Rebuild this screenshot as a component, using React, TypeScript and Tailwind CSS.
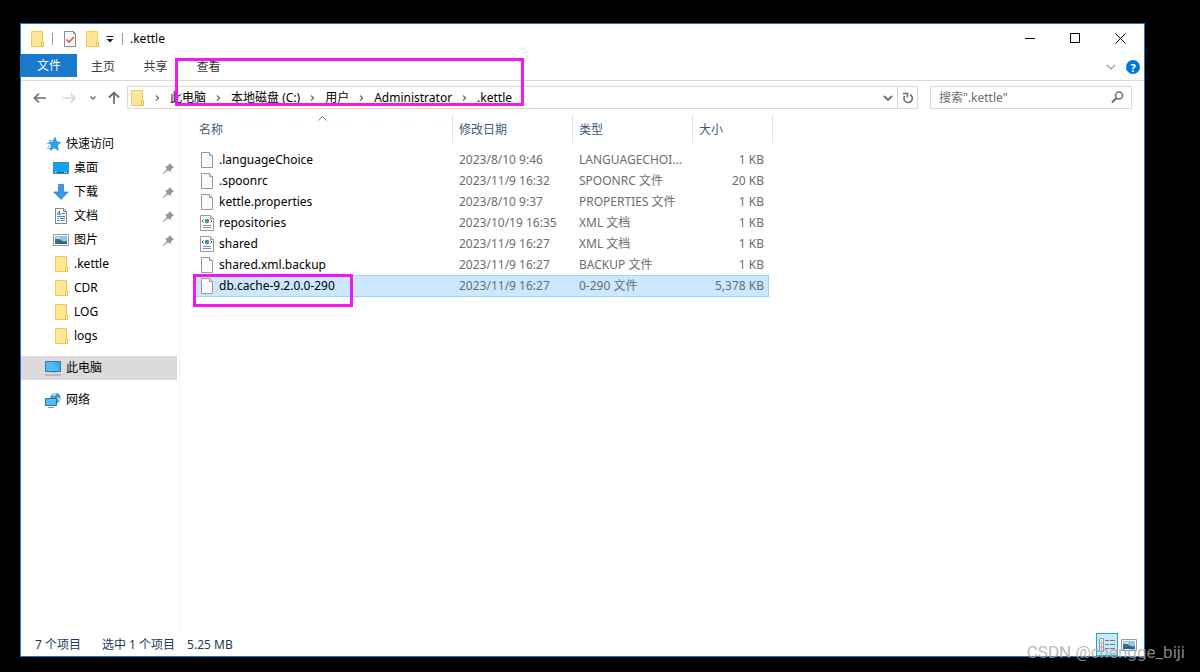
import type { ReactNode } from "react";

const files = [
  { name: ".languageChoice", date: "2023/8/10 9:46", type: "LANGUAGECHOI...", size: "1 KB", xml: false },
  { name: ".spoonrc", date: "2023/11/9 16:32", type: "SPOONRC 文件", size: "20 KB", xml: false },
  { name: "kettle.properties", date: "2023/8/10 9:37", type: "PROPERTIES 文件", size: "1 KB", xml: false },
  { name: "repositories", date: "2023/10/19 16:35", type: "XML 文档", size: "1 KB", xml: true },
  { name: "shared", date: "2023/11/9 16:27", type: "XML 文档", size: "1 KB", xml: true },
  { name: "shared.xml.backup", date: "2023/11/9 16:27", type: "BACKUP 文件", size: "1 KB", xml: false },
  { name: "db.cache-9.2.0.0-290", date: "2023/11/9 16:27", type: "0-290 文件", size: "5,378 KB", xml: false, selected: true },
];

const crumbs = ["此电脑", "本地磁盘 (C:)", "用户", "Administrator", ".kettle"];

function Icon({ children }: { children: ReactNode }) {
  return (
    <svg width="16" height="16" viewBox="0 0 16 16" fill="none" className="shrink-0" aria-hidden="true">
      {children}
    </svg>
  );
}

function FolderIcon() {
  return (
    <Icon>
      <path d="M2.500 .5h11v10.500h1v4.500h-12z" fill="#ffe695" stroke="#f2cb57" />
      <path d="M12.500 15.500v-4.500h2v4.500z" fill="#fff0b8" stroke="#e9bf48" />
    </Icon>
  );
}

function FileIcon({ xml }: { xml: boolean }) {
  if (xml) {
    return (
      <Icon>
        <path d="M1.500 .5h10l3 3v12h-13z" fill="#fdfdfd" stroke="#9a9a9a" />
        <path d="M11.500 .5v3h3" fill="#e4e4e4" stroke="#9a9a9a" />
        <circle cx="8" cy="6" r="2.200" fill="#2f8fc0" />
        <path d="M7 4.500q2 .5 2 3.500l-2-1z" fill="#37b26b" />
        <path d="M4.500 4.500L3 6l1.500 1.500M11.500 4.500L13 6l-1.500 1.500" stroke="#555" />
        <path d="M4 10.500h8M4 12.500h8" stroke="#8890b5" />
      </Icon>
    );
  }
  return (
    <Icon>
      <path d="M2.500 .5h8l3 3v12h-11z" fill="#f9fafc" stroke="#989898" />
      <path d="M10.500 .5v3h3" fill="#e2e2e2" stroke="#989898" />
    </Icon>
  );
}

function StarIcon() {
  return (
    <Icon>
      <path d="M10 1.500l1.500 4.500 4 .4-3.300 3 1 4.800-4-2.600-4 2.600 1.400-4.800L4 6.300l4.200-.3z" fill="#2aa1f0" stroke="#1b7fcb" strokeWidth=".8" />
      <path d="M4 4.500h3.500M2 7.500h3M3 10h2.500M2 12.500h3" stroke="#5bb5ef" />
    </Icon>
  );
}

function DesktopIcon() {
  return (
    <Icon>
      <path d="M.5 2.500h15v11H.5z" fill="#12a0f8" stroke="#3c86b8" />
      <path d="M1 12.500h14" stroke="#0b5fa5" />
      <path d="M2 12.500h1.500M11 12.500h1M13 12.500h1" stroke="#fff" />
    </Icon>
  );
}

function DownloadIcon() {
  return (
    <Icon>
      <path d="M5.500 .5h5v7.500h4.800L8 15.400.7 8h4.800z" fill="#3d97ec" stroke="#2f7fd0" strokeWidth=".8" />
    </Icon>
  );
}

function DocumentIcon() {
  return (
    <Icon>
      <path d="M2.500 .5h8l3 3v12h-11z" fill="#fff" stroke="#858585" />
      <path d="M10.500 .5v3h3" stroke="#858585" />
      <path d="M4.500 5.500L6.500 3v4M4 6h4M8.500 5.500H12M4 8.500h8M7 10.500h5" stroke="#3389c9" />
      <path d="M4 10.500h2M4 12.500h3M8 12.500h4" stroke="#8d8d8d" />
    </Icon>
  );
}

function PictureIcon() {
  return (
    <Icon>
      <path d="M.5 2.500h15v11H.5z" fill="#fff" stroke="#9a9a9a" />
      <path d="M2 4h12v8H2z" fill="#8fc6f2" />
      <path d="M2 7q3-1.500 6 1t6 .5V12H2z" fill="#3d7460" />
      <path d="M2 10.500q6-1.500 12 0V12H2z" fill="#2c5faa" />
      <path d="M3 6h4" stroke="#fff" />
    </Icon>
  );
}

function ComputerIcon() {
  return (
    <Icon>
      <path d="M.5 1.500h15v10H.5z" fill="#4dbdf9" stroke="#38789f" />
      <path d="M9 2h6v9z" fill="#35a9ee" />
      <path d="M4.500 12.500h7" stroke="#a9c4d4" />
      <path d="M0 15h16" stroke="#8a9ba8" />
    </Icon>
  );
}

function NetworkIcon() {
  return (
    <Icon>
      <circle cx="10.500" cy="6" r="5.200" fill="#4f91b8" />
      <path d="M7 3q2-2.500 4.500-2l-1 2.500-2 1zM12 5l3.500 1-1.500 4z" fill="#bfe0ea" />
      <path d="M.5 6.500h11v7H.5z" fill="#4dbdf9" stroke="#2c76a3" />
      <path d="M3 15.500h6" stroke="#7e99aa" />
    </Icon>
  );
}

function PinIcon() {
  return (
    <svg width="11" height="11" viewBox="0 0 11 11" className="ml-auto mr-[3px] shrink-0" aria-hidden="true">
      <path d="M6.500 0L11 4.500 9.500 5 8 6.500 7.500 9 5 7.200.5 11 0 10.500 3.800 6 2 3.500 4.500 3 6 1.500z" fill="#8c9aa3" />
    </svg>
  );
}

function Chevron() {
  return (
    <svg width="25" height="10" viewBox="0 0 25 10" fill="none" className="shrink-0" aria-hidden="true">
      <path d="M11 2.500l2.500 2.500L11 7.500" stroke="#777" strokeWidth="1.500" />
    </svg>
  );
}

function SideItem({ icon, label, nested, pinned, active }: {
  icon: ReactNode;
  label: string;
  nested?: boolean;
  pinned?: boolean;
  active?: boolean;
}) {
  return (
    <li>
      <a
        href="#"
        className={`flex h-6 items-center gap-[5px] ${nested ? "pl-8" : "pl-6"} ${active ? "bg-[#dcdadc]" : ""}`}
      >
        {icon}
        <span>{label}</span>
        {pinned && <PinIcon />}
      </a>
    </li>
  );
}

function TitleBar() {
  return (
    <header className="flex h-[30px] items-center">
      <div className="flex items-center pl-2">
        <FolderIcon />
        <span className="ml-[7px] h-3 w-px bg-[#9a9a9a]" />
        <button type="button" aria-label="属性" className="ml-[9px]">
          <Icon>
            <path d="M2.500 .5h9l2 2v13h-11z" fill="#f8f9fb" stroke="#8c8c8c" />
            <path d="M11.500 .5v2h2" stroke="#8c8c8c" />
            <path d="M4.500 8.500l2.500 2.500 5-5" stroke="#ee5a24" strokeWidth="1.600" />
          </Icon>
        </button>
        <button type="button" aria-label="新建文件夹" className="ml-[6px]">
          <FolderIcon />
        </button>
        <button type="button" aria-label="自定义快速访问工具栏" className="ml-[5px]">
          <svg width="10" height="10" viewBox="0 0 10 10" aria-hidden="true">
            <path d="M1.500 2.500h7" stroke="#222" />
            <path d="M1.500 5h7L5 8.500z" fill="#222" />
          </svg>
        </button>
        <span className="ml-[7px] h-3 w-px bg-[#9a9a9a]" />
        <h1 className="ml-[7px]">.kettle</h1>
      </div>
      <div className="ml-auto flex self-start pr-px">
        <button type="button" aria-label="最小化" className="flex h-7 w-[45px] items-center justify-center">
          <svg width="11" height="11" viewBox="0 0 11 11"><path d="M0 5.500h10" stroke="#000" /></svg>
        </button>
        <button type="button" aria-label="最大化" className="flex h-7 w-[45px] items-center justify-center">
          <svg width="11" height="11" viewBox="0 0 11 11"><path d="M.5 .5h9v9h-9z" fill="none" stroke="#000" /></svg>
        </button>
        <button type="button" aria-label="关闭" className="flex h-7 w-[45px] items-center justify-center">
          <svg width="11" height="11" viewBox="0 0 11 11"><path d="M.5 .5l10 10M10.500 .5l-10 10" stroke="#000" /></svg>
        </button>
      </div>
    </header>
  );
}

function Ribbon() {
  return (
    <div className="flex h-[27px] border-b border-[#dadbdc] text-[#3b3b3b]">
      <button type="button" className="h-[23px] w-14 bg-[#1979ca] text-white">文件</button>
      <button type="button" className="h-[25px] w-[52px]">主页</button>
      <button type="button" className="h-[25px] w-[53px]">共享</button>
      <button type="button" className="h-[25px] w-[53px]">查看</button>
      <div className="ml-auto flex items-center gap-[10px] pr-1">
        <button type="button" aria-label="展开功能区">
          <svg width="10" height="8" viewBox="0 0 10 8" fill="none"><path d="M1 2l4 4 4-4" stroke="#999" strokeWidth="1.200" /></svg>
        </button>
        <button type="button" aria-label="帮助" className="flex size-[14px] items-center justify-center rounded-full bg-[#0078d7] text-[11px] font-bold leading-none text-white">
          ?
        </button>
      </div>
    </div>
  );
}

function AddressBar() {
  return (
    <div className="flex h-[34px] items-start pt-[5px] pr-3">
      <nav className="flex h-[23px] w-[106px] items-center" aria-label="导航">
        <button type="button" aria-label="后退" className="ml-3">
          <svg width="14" height="12" viewBox="0 0 14 12" fill="none"><path d="M13 6H1.500M6 1.500L1.500 6 6 10.500" stroke="#6e6e6e" strokeWidth="1.700" /></svg>
        </button>
        <button type="button" aria-label="前进" className="ml-4">
          <svg width="14" height="12" viewBox="0 0 14 12" fill="none"><path d="M0 6h11.500M7.500 1.500L12 6l-4.500 4.500" stroke="#d5d5d5" strokeWidth="1.500" /></svg>
        </button>
        <button type="button" aria-label="最近浏览的位置" className="ml-3">
          <svg width="8" height="8" viewBox="0 0 8 8" fill="none"><path d="M1.500 2.500L4 5l2.500-2.500" stroke="#777" strokeWidth="1.500" /></svg>
        </button>
        <button type="button" aria-label="上移" className="ml-[10px]">
          <svg width="14" height="14" viewBox="0 0 14 14" fill="none"><path d="M7 13V2M2 6.500L7 1.500l5 5" stroke="#6e6e6e" strokeWidth="1.800" /></svg>
        </button>
      </nav>
      <div className="flex h-[23px] min-w-0 flex-1 items-center border border-[#d9d9d9] pl-px">
        <FolderIcon />
        <Chevron />
        {crumbs.map((c, i) => (
          <div key={c} className="flex items-center">
            {i > 0 && <Chevron />}
            <button type="button" className="whitespace-nowrap">{c}</button>
          </div>
        ))}
        <button type="button" aria-label="以前的位置" className="ml-auto flex h-full w-[19px] items-center justify-center">
          <svg width="10" height="8" viewBox="0 0 10 8" fill="none"><path d="M1 2l4 4 4-4" stroke="#6e6e6e" strokeWidth="1.800" /></svg>
        </button>
        <button type="button" aria-label="刷新" className="flex h-full w-5 items-center justify-center border-l border-[#d9d9d9]">
          <svg width="12" height="12" viewBox="0 0 12 12" fill="none">
            <path d="M8.300 2.700A4.200 4.200 0 1 1 2.600 4" stroke="#6e6e6e" strokeWidth="1.600" />
            <path d="M1 1.500h4.500V5.500" stroke="#6e6e6e" strokeWidth="1.500" />
          </svg>
        </button>
      </div>
      <label className="ml-3 flex h-[23px] w-[202px] items-center border border-[#d9d9d9] pl-2 pr-[7px]">
        <input
          type="text"
          aria-label="搜索"
          placeholder={'搜索".kettle"'}
          className="min-w-0 flex-1 bg-transparent outline-none placeholder:text-[#6d6d6d]"
        />
        <svg width="13" height="13" viewBox="0 0 13 13" fill="none" aria-hidden="true">
          <circle cx="8" cy="4.500" r="3.500" stroke="#6e6e6e" strokeWidth="1.500" />
          <path d="M5.500 7L1 11.500" stroke="#6e6e6e" strokeWidth="2" />
        </svg>
      </label>
    </div>
  );
}

function Sidebar() {
  return (
    <aside className="w-[159px] shrink-0 border-r border-[#f3f3f3] pr-[2px] pt-[17px]">
      <ul>
        <SideItem icon={<StarIcon />} label="快速访问" />
        <SideItem nested pinned icon={<DesktopIcon />} label="桌面" />
        <SideItem nested pinned icon={<DownloadIcon />} label="下载" />
        <SideItem nested pinned icon={<DocumentIcon />} label="文档" />
        <SideItem nested pinned icon={<PictureIcon />} label="图片" />
        <SideItem nested icon={<FolderIcon />} label=".kettle" />
        <SideItem nested icon={<FolderIcon />} label="CDR" />
        <SideItem nested icon={<FolderIcon />} label="LOG" />
        <SideItem nested icon={<FolderIcon />} label="logs" />
      </ul>
      <ul className="mt-2 flex flex-col gap-2">
        <SideItem active icon={<ComputerIcon />} label="此电脑" />
        <SideItem icon={<NetworkIcon />} label="网络" />
      </ul>
    </aside>
  );
}

function FileTable() {
  return (
    <table className="w-[580px] table-fixed border-separate border-spacing-0 text-left">
      <colgroup>
        <col className="w-[260px]" />
        <col className="w-[120px]" />
        <col className="w-[120px]" />
        <col className="w-[76px]" />
        <col className="w-[4px]" />
      </colgroup>
      <thead>
        <tr className="h-7 text-[#44597a]">
          <th className="relative border-r border-[#e5e5e5] px-1.5 pb-0 pt-[2px] font-normal">
            名称
            <svg width="9" height="5" viewBox="0 0 9 5" fill="none" className="absolute left-[125px] top-px">
              <path d="M.5 4.500l4-4 4 4" stroke="#777" />
            </svg>
          </th>
          <th className="border-r border-[#e5e5e5] px-1.5 pb-0 pt-[2px] font-normal">修改日期</th>
          <th className="border-r border-[#e5e5e5] px-1.5 pb-0 pt-[2px] font-normal">类型</th>
          <th colSpan={2} className="border-r border-[#e5e5e5] px-1.5 pb-0 pt-[2px] font-normal">大小</th>
        </tr>
      </thead>
      <tbody className="text-[#6d6d6d] before:block before:h-1.5">
        {files.map((f) => {
          const cell = f.selected ? "border-y border-[#99d1ff] bg-[#cce8ff]" : "";
          return (
            <tr key={f.name} className={f.selected ? "h-[22px]" : "h-[21px]"}>
              <td className={`${cell} p-0 pl-1.5 text-black`}>
                <div className="flex items-center gap-1">
                  <FileIcon xml={f.xml} />
                  <span>{f.name}</span>
                </div>
              </td>
              <td className={`${cell} p-0 pl-1.5`}>{f.date}</td>
              <td className={`${cell} whitespace-nowrap p-0 pl-1.5`}>{f.type}</td>
              <td className={`${cell} p-0 text-right ${f.selected ? "border-r pr-1" : "pr-[5px]"}`}>{f.size}</td>
            </tr>
          );
        })}
      </tbody>
    </table>
  );
}

function StatusBar() {
  return (
    <footer className="flex h-[23px] items-center pl-[14px] pr-[7px] text-[#1e395b]">
      <span>7 个项目</span>
      <span className="ml-[21px]">选中 1 个项目</span>
      <span className="ml-3">5.25 MB</span>
      <button type="button" aria-label="详细信息" className="ml-auto flex h-[23px] w-[22px] items-center justify-center border border-[#26a0da] bg-[#cbe8f6]">
        <svg width="16" height="14" viewBox="0 0 16 14" fill="none">
          <path d="M.5 .5h4v13h-4zM.5 5h4M.5 9h4" fill="#fff" stroke="#999" />
          <path d="M2 3h1" stroke="#3a9" />
          <path d="M2 7h1" stroke="#36c" />
          <path d="M2 11h1" stroke="#d33" />
          <path d="M6 2.500h4M11 2.500h5M6 6.500h4M11 6.500h5M6 10.500h4M11 10.500h5" stroke="#777" />
        </svg>
      </button>
      <button type="button" aria-label="大图标" className="ml-[3px]">
        <PictureIcon />
      </button>
    </footer>
  );
}

export default function App() {
  return (
    <div className="relative flex min-h-screen flex-col bg-black pb-[15px] pl-5 pr-[55px] pt-[23px] font-['Noto_Sans','Noto_Sans_CJK_SC',sans-serif] text-xs text-black">
      <div className="relative flex flex-1 flex-col border border-[#1979ca] bg-white">
        <TitleBar />
        <Ribbon />
        <AddressBar />
        <div className="flex flex-1">
          <Sidebar />
          <main className="min-w-0 flex-1 pl-[13px]">
            <FileTable />
          </main>
        </div>
        <StatusBar />

        {/* highlight marks drawn over the window */}
        <div className="pointer-events-none absolute left-[154px] top-[34px] h-12 w-[349px] border-3 border-[#f318f3]" />
        <div className="pointer-events-none absolute left-[172px] top-[250px] h-[33px] w-40 border-3 border-[#f318f3]" />
      </div>
      <p className="pointer-events-none absolute bottom-2 right-[15px] font-[Roboto,sans-serif] text-[17px] leading-6 text-[#a8a8a8]/80">
        CSDN @chengge_biji
      </p>
    </div>
  );
}
